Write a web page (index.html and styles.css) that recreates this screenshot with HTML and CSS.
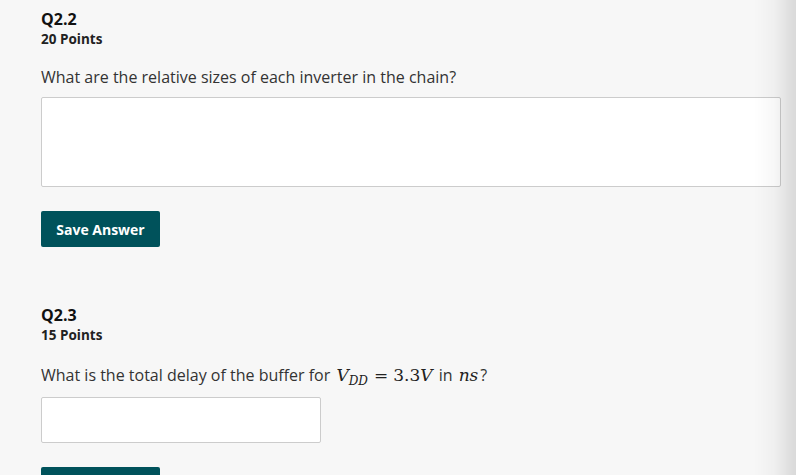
FILE: index.html
```html
<!DOCTYPE html>
<html>
<head>
<meta charset="utf-8">
<link rel="stylesheet" href="styles.css">
</head>
<body>
<div class="page">
  <section class="question">
    <h2 class="q-title">Q2.2</h2>
    <div class="q-points">20 Points</div>
    <p class="q-text">What are the relative sizes of each inverter in the chain?</p>
    <div class="textarea"></div>
    <button class="save">Save Answer</button>
  </section>
  <section class="question second">
    <h2 class="q-title">Q2.3</h2>
    <div class="q-points">15 Points</div>
    <p class="q-text q-text-math">What is the total delay of the buffer for <span class="math"><i>V</i><sub><i>DD</i></sub><span class="eq">=</span><span class="num">3.3</span><i>V</i></span> in <span class="math"><i>ns</i></span>?</p>
    <div class="input"></div>
    <button class="save">Save Answer</button>
  </section>
</div>
<div class="edge-shade"></div>
</body>
</html>
```
FILE: styles.css
```css
html, body {
  margin: 0;
  padding: 0;
  background: #f7f7f7;
  overflow: hidden;
  height: 475px;
}
body {
  font-family: "Open Sans", "Liberation Sans", sans-serif;
  color: #333;
}
.page {
  padding: 8px 15px 0 41px;
}
.question {
  display: flex;
  flex-direction: column;
  align-items: flex-start;
}
.second {
  margin-top: 57px;
}
.q-title {
  margin: 0;
  font-size: 16px;
  line-height: 22px;
  font-weight: 700;
  color: #111;
}
.q-points {
  font-size: 13.5px;
  font-weight: 700;
  line-height: 18px;
  color: #222;
}
.q-text {
  margin: 18px 0 0;
  font-size: 16px;
  line-height: 22px;
  color: #333;
}
.q-text-math {
  margin-top: 20px;
}
.math {
  font-family: "DejaVu Serif", "Liberation Serif", serif;
  font-size: 17px;
  color: #222;
  margin: 0 2px 0 2px;
}
.math sub {
  font-size: 12px;
  vertical-align: -4px;
  line-height: 0;
}
.eq {
  margin: 0 5px 0 6px;
}
.textarea {
  align-self: stretch;
  height: 88px;
  margin-top: 9px;
  background: #fff;
  border: 1px solid #ccc;
  border-radius: 2px;
}
.input {
  width: 278px;
  height: 44px;
  margin-top: 11px;
  background: #fff;
  border: 1px solid #ccc;
  border-radius: 2px;
}
.save {
  margin-top: 24px;
  width: 119px;
  height: 36px;
  background: #00525b;
  color: #fff;
  border: none;
  border-radius: 2px;
  font-family: "Open Sans", "Liberation Sans", sans-serif;
  font-size: 14px;
  font-weight: 700;
  padding: 0;
}
.edge-shade {
  position: fixed;
  top: 0;
  right: 0;
  width: 42px;
  height: 100%;
  background: linear-gradient(to right, rgba(0,0,0,0), rgba(0,0,0,0.03) 50%, rgba(0,0,0,0.12));
  pointer-events: none;
}
```
